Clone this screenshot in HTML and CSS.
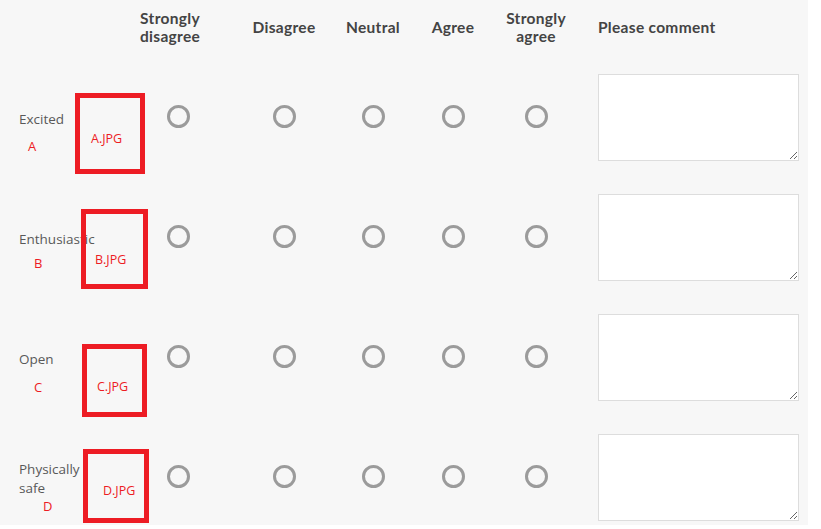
FILE: index.html
```html
<!DOCTYPE html>
<html>
<head>
<meta charset="utf-8">
<link rel="stylesheet" href="styles.css">
</head>
<body>
<div class="survey">
  <div class="grid">
    <div class="hcell"></div>
    <div class="hcell">Strongly<br>disagree</div>
    <div class="hcell">Disagree</div>
    <div class="hcell">Neutral</div>
    <div class="hcell">Agree</div>
    <div class="hcell">Strongly<br>agree</div>
    <div class="hcell comment-head">Please comment</div>

    <div class="lcell"><span class="label">Excited</span><span class="mark mark-a">A</span><div class="pic pic-a">A.JPG</div></div>
    <div class="rcell first"><input type="radio" name="r1"></div>
    <div class="rcell"><input type="radio" name="r1"></div>
    <div class="rcell"><input type="radio" name="r1"></div>
    <div class="rcell"><input type="radio" name="r1"></div>
    <div class="rcell"><input type="radio" name="r1"></div>
    <div class="ccell"><textarea></textarea></div>

    <div class="lcell"><span class="label">Enthusiastic</span><span class="mark mark-b">B</span><div class="pic pic-b">B.JPG</div></div>
    <div class="rcell first"><input type="radio" name="r2"></div>
    <div class="rcell"><input type="radio" name="r2"></div>
    <div class="rcell"><input type="radio" name="r2"></div>
    <div class="rcell"><input type="radio" name="r2"></div>
    <div class="rcell"><input type="radio" name="r2"></div>
    <div class="ccell"><textarea></textarea></div>

    <div class="lcell"><span class="label">Open</span><span class="mark mark-c">C</span><div class="pic pic-c">C.JPG</div></div>
    <div class="rcell first"><input type="radio" name="r3"></div>
    <div class="rcell"><input type="radio" name="r3"></div>
    <div class="rcell"><input type="radio" name="r3"></div>
    <div class="rcell"><input type="radio" name="r3"></div>
    <div class="rcell"><input type="radio" name="r3"></div>
    <div class="ccell"><textarea></textarea></div>

    <div class="lcell"><span class="label">Physically safe</span><span class="mark mark-d">D</span><div class="pic pic-d">D.JPG</div></div>
    <div class="rcell first"><input type="radio" name="r4"></div>
    <div class="rcell"><input type="radio" name="r4"></div>
    <div class="rcell"><input type="radio" name="r4"></div>
    <div class="rcell"><input type="radio" name="r4"></div>
    <div class="rcell"><input type="radio" name="r4"></div>
    <div class="ccell"><textarea></textarea></div>
  </div>
</div>
</body>
</html>
```

FILE: styles.css
```css
html, body {
  margin: 0;
  padding: 0;
  background: #ffffff;
}

.survey {
  width: 808px;
  height: 525px;
  overflow: hidden;
  background: #f7f7f7;
  font-family: "Open Sans", "Liberation Sans", sans-serif;
}

.grid {
  display: grid;
  grid-template-columns: 105px 130px 98px 80px 80px 86px 229px;
  grid-template-rows: 57px 120px 120px 120px 120px;
}

.hcell {
  display: flex;
  align-items: center;
  justify-content: center;
  text-align: center;
  height: 54px;
  font-family: Lato, "Open Sans", sans-serif;
  font-weight: 700;
  font-size: 15.5px;
  letter-spacing: 0.3px;
  line-height: 18px;
  color: #444444;
}

.hcell.comment-head {
  justify-content: flex-start;
  padding-left: 19px;
}

.lcell {
  position: relative;
  display: flex;
  align-items: center;
  height: 124px;
  padding-left: 19px;
  box-sizing: border-box;
}

.label {
  width: 60px;
  font-size: 13.5px;
  line-height: 19px;
  color: #595959;
}

.mark {
  position: absolute;
  font-size: 13px;
  line-height: 16px;
  color: #ed1c24;
}

.mark-a { left: 28px; top: 81px; }
.mark-b { left: 34px; top: 78px; }
.mark-c { left: 34px; top: 82px; }
.mark-d { left: 43px; top: 81px; }

.pic {
  position: absolute;
  box-sizing: border-box;
  border: 5px solid #ed1c24;
  font-size: 12.5px;
  line-height: 18px;
  color: #ed1c24;
}

.pic-a { left: 75px; top: 36px; width: 70px; height: 81px; padding: 32px 0 0 11px; }
.pic-b { left: 81px; top: 32px; width: 67px; height: 80px; padding: 37px 0 0 9px; }
.pic-c { left: 82px; top: 47px; width: 65px; height: 73px; padding: 29px 0 0 10px; }
.pic-d { left: 83px; top: 32px; width: 66px; height: 74px; padding: 28px 0 0 15px; }

.rcell {
  display: flex;
  align-items: center;
  justify-content: center;
  height: 119px;
}

.rcell.first {
  padding-left: 16px;
}

.rcell input {
  appearance: none;
  -webkit-appearance: none;
  box-sizing: border-box;
  width: 23px;
  height: 23px;
  margin: 0;
  border: 3px solid #9b9b9b;
  border-radius: 50%;
  background: transparent;
}

.ccell {
  padding: 17px 0 0 19px;
}

.ccell textarea {
  display: block;
  box-sizing: border-box;
  width: 201px;
  height: 87px;
  margin: 0;
  border: 1px solid #dddddd;
  background: #ffffff;
  resize: vertical;
  outline: none;
}
```
